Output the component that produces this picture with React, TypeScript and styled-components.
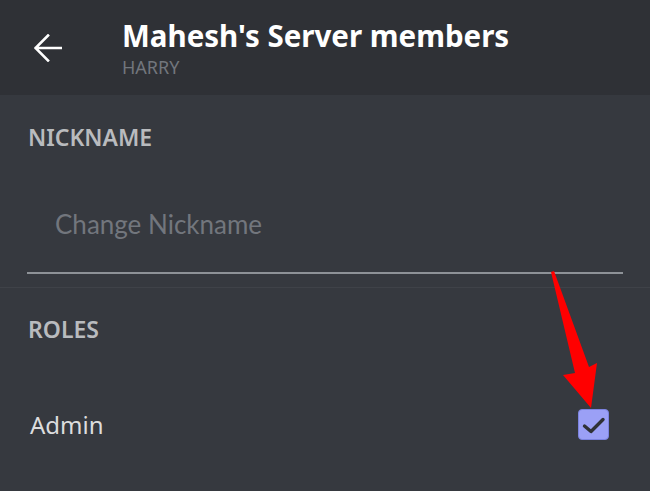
import styled, { createGlobalStyle } from "styled-components";

const GlobalStyle = createGlobalStyle`
  html, body {
    margin: 0;
    padding: 0;
    background: #36393f;
  }
  body {
    font-family: "Noto Sans", "Open Sans", sans-serif;
  }
`;

const Page = styled.div`
  position: relative;
  width: 650px;
  height: 491px;
  overflow: hidden;
  background: #36393f;
`;

const Header = styled.header`
  display: flex;
  align-items: center;
  height: 95px;
  padding-left: 34px;
  gap: 60px;
  background: #2f3136;
`;

const BackButton = styled.button`
  display: flex;
  align-items: center;
  justify-content: center;
  width: 28px;
  height: 28px;
  padding: 0;
  border: none;
  background: none;
  color: #ffffff;
  cursor: pointer;
`;

const TitleBlock = styled.div`
  display: flex;
  flex-direction: column;
  gap: 2px;
`;

const Title = styled.h1`
  margin: 0;
  font-size: 29.5px;
  line-height: 36px;
  font-weight: 700;
  color: #ffffff;
`;

const Subtitle = styled.div`
  font-size: 18px;
  line-height: 22px;
  color: #72767d;
`;

const Section = styled.section<{ $top: number; $bottom: number; $divider?: boolean }>`
  display: flex;
  flex-direction: column;
  padding: ${(p) => p.$top}px 27px ${(p) => p.$bottom}px;
  border-bottom: ${(p) => (p.$divider ? "1px solid #3f4248" : "none")};
`;

const SectionLabel = styled.h2`
  margin: 0 0 0 1px;
  font-size: 23px;
  line-height: 24px;
  font-weight: 600;
  color: #b9bbbe;
`;

const NicknameInput = styled.input`
  margin-top: 59px;
  padding: 0 0 32px 28px;
  border: none;
  border-bottom: 2px solid #8e9297;
  background: transparent;
  font-family: Lato, "Noto Sans", sans-serif;
  font-size: 26px;
  line-height: 32px;
  height: 32px;
  box-sizing: content-box;
  color: #dcddde;
  outline: none;

  &::placeholder {
    color: #72767d;
  }
`;

const RoleRow = styled.label`
  display: flex;
  align-items: center;
  justify-content: space-between;
  margin-top: 68px;
  padding-right: 14px;
`;

const RoleName = styled.span`
  margin-left: 3px;
  font-size: 24px;
  line-height: 31px;
  color: #dcddde;
`;

const CheckBox = styled.span<{ $checked: boolean }>`
  display: flex;
  align-items: center;
  justify-content: center;
  width: 29px;
  height: 29px;
  border: 1px solid #7c83e0;
  border-radius: 4px;
  background: ${(p) => (p.$checked ? "#9ba0f6" : "transparent")};
`;

const Pointer = styled.svg`
  position: absolute;
  inset: 0;
  pointer-events: none;
`;

export default function App() {
  return (
    <Page>
      <GlobalStyle />
      <Header>
        <BackButton aria-label="Back">
          <svg width="28" height="28" viewBox="0 0 28 28" fill="none">
            <path
              d="M27 14H2M14 1.5L1.5 14L14 26.5"
              stroke="currentColor"
              strokeWidth="2.6"
              strokeLinecap="square"
            />
          </svg>
        </BackButton>
        <TitleBlock>
          <Title>Mahesh's Server members</Title>
          <Subtitle>HARRY</Subtitle>
        </TitleBlock>
      </Header>

      <Section $top={30} $bottom={13} $divider>
        <SectionLabel>NICKNAME</SectionLabel>
        <NicknameInput placeholder="Change Nickname" />
      </Section>

      <Section $top={29} $bottom={40}>
        <SectionLabel>ROLES</SectionLabel>
        <RoleRow>
          <RoleName>Admin</RoleName>
          <CheckBox $checked>
            <svg width="29" height="29" viewBox="0 0 29 29" fill="none">
              <path
                d="M5.5 16L12 21.5L24 9.5"
                stroke="#2f3136"
                strokeWidth="3.4"
                strokeLinecap="round"
                strokeLinejoin="round"
              />
            </svg>
          </CheckBox>
        </RoleRow>
      </Section>

      <Pointer width="650" height="491" viewBox="0 0 650 491">
        <polygon
          points="551,272 554,271 589,367 597,363 591,408 563,375 575,373"
          fill="#ff0000"
        />
      </Pointer>
    </Page>
  );
}
